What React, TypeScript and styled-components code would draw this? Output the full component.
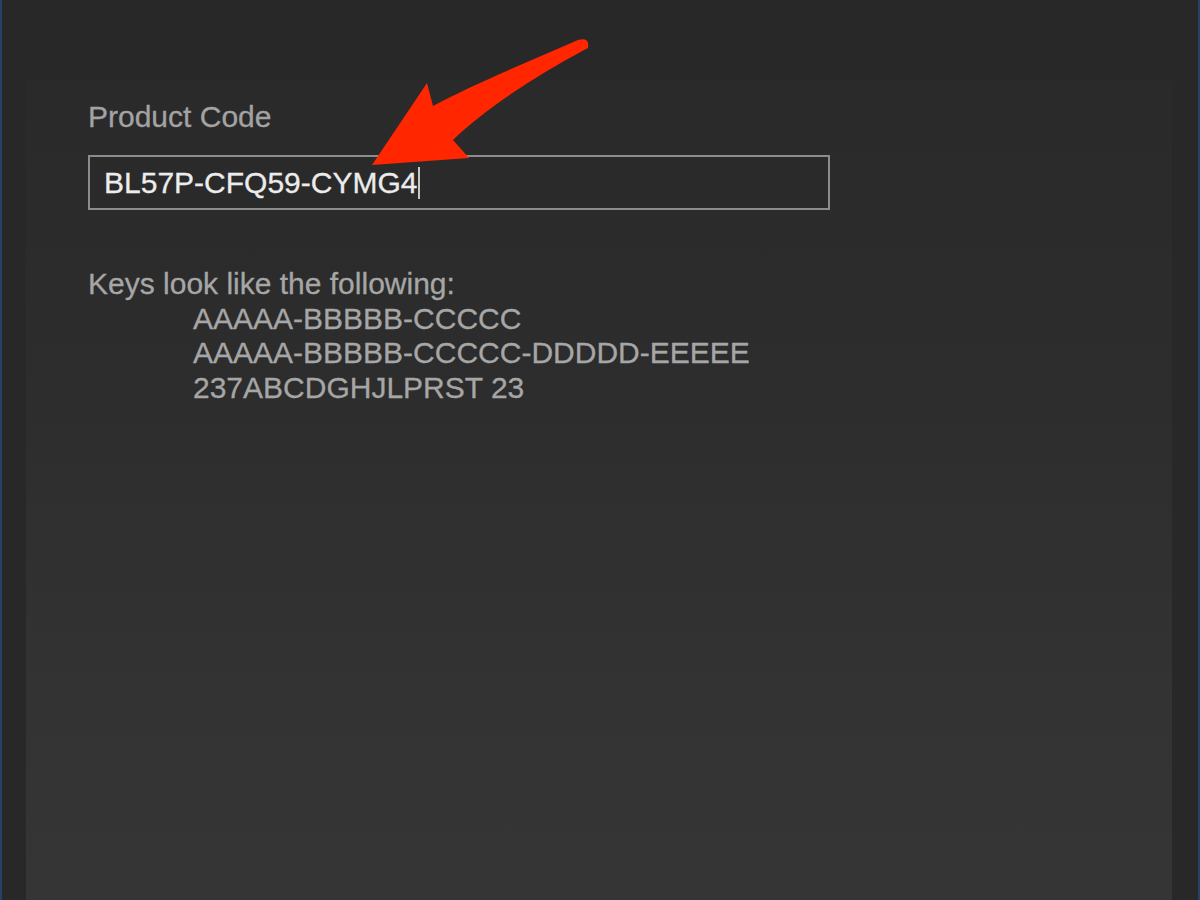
import React from 'react';
import styled, { createGlobalStyle } from 'styled-components';

const GlobalStyle = createGlobalStyle`
  html, body {
    margin: 0;
    padding: 0;
    background: #282828;
  }
  * {
    box-sizing: border-box;
  }
`;

const Window = styled.div`
  position: relative;
  width: 1200px;
  height: 900px;
  display: flex;
  padding: 80px 26px 0 26px;
  background: #282828;
  border-left: 2px solid #26406a;
  border-right: 2px solid #26406a;
  font-family: "Liberation Sans", Arial, Helvetica, sans-serif;
  -webkit-text-stroke: 0.3px currentColor;
  overflow: hidden;
`;

const Panel = styled.div`
  flex: 1;
  margin-left: -2px;
  padding: 19px 62px 0 62px;
  background: linear-gradient(to bottom, #2a2a2a 0%, #2d2d2d 40%, #333333 75%, #353535 100%);
  display: flex;
  flex-direction: column;
`;

const Label = styled.div`
  font-size: 30px;
  line-height: 35px;
  color: #a3a3a3;
`;

const CodeField = styled.div`
  margin-top: 21px;
  width: 742px;
  height: 55px;
  padding: 8px 14px;
  border: 2px solid #8c8c8c;
  background: #2a2a2a;
  display: flex;
  align-items: center;
  font-size: 30px;
  line-height: 35px;
  color: #ececec;
`;

const Caret = styled.span`
  display: inline-block;
  width: 1.5px;
  height: 32px;
  margin-left: 1px;
  background: #c8c8c8;
`;

const Hint = styled.div`
  margin-top: 57px;
  font-size: 30px;
  line-height: 34.5px;
  color: #a6a6a6;
`;

const HintLine = styled.div<{ $indent?: boolean }>`
  padding-left: ${p => (p.$indent ? '105px' : '0')};
  white-space: nowrap;
`;

const Annotation = styled.svg`
  position: absolute;
  left: 0;
  top: 0;
  pointer-events: none;
`;

const App = () => {
  return (
    <>
      <GlobalStyle />
      <Window>
        <Panel>
          <Label>Product Code</Label>
          <CodeField>
            BL57P-CFQ59-CYMG4<Caret />
          </CodeField>
          <Hint>
            <HintLine>Keys look like the following:</HintLine>
            <HintLine $indent>AAAAA-BBBBB-CCCCC</HintLine>
            <HintLine $indent>AAAAA-BBBBB-CCCCC-DDDDD-EEEEE</HintLine>
            <HintLine $indent>237ABCDGHJLPRST 23</HintLine>
          </Hint>
        </Panel>
        <Annotation width="1200" height="900" viewBox="0 0 1200 900">
          <path
            d="M370,165 L425,83 L431,106 C472,84 530,60 576,40 Q588,37 586,48 C552,66 490,102 451,140 L467,158 Z"
            fill="#ff2600"
          />
        </Annotation>
      </Window>
    </>
  );
};

export default App;
